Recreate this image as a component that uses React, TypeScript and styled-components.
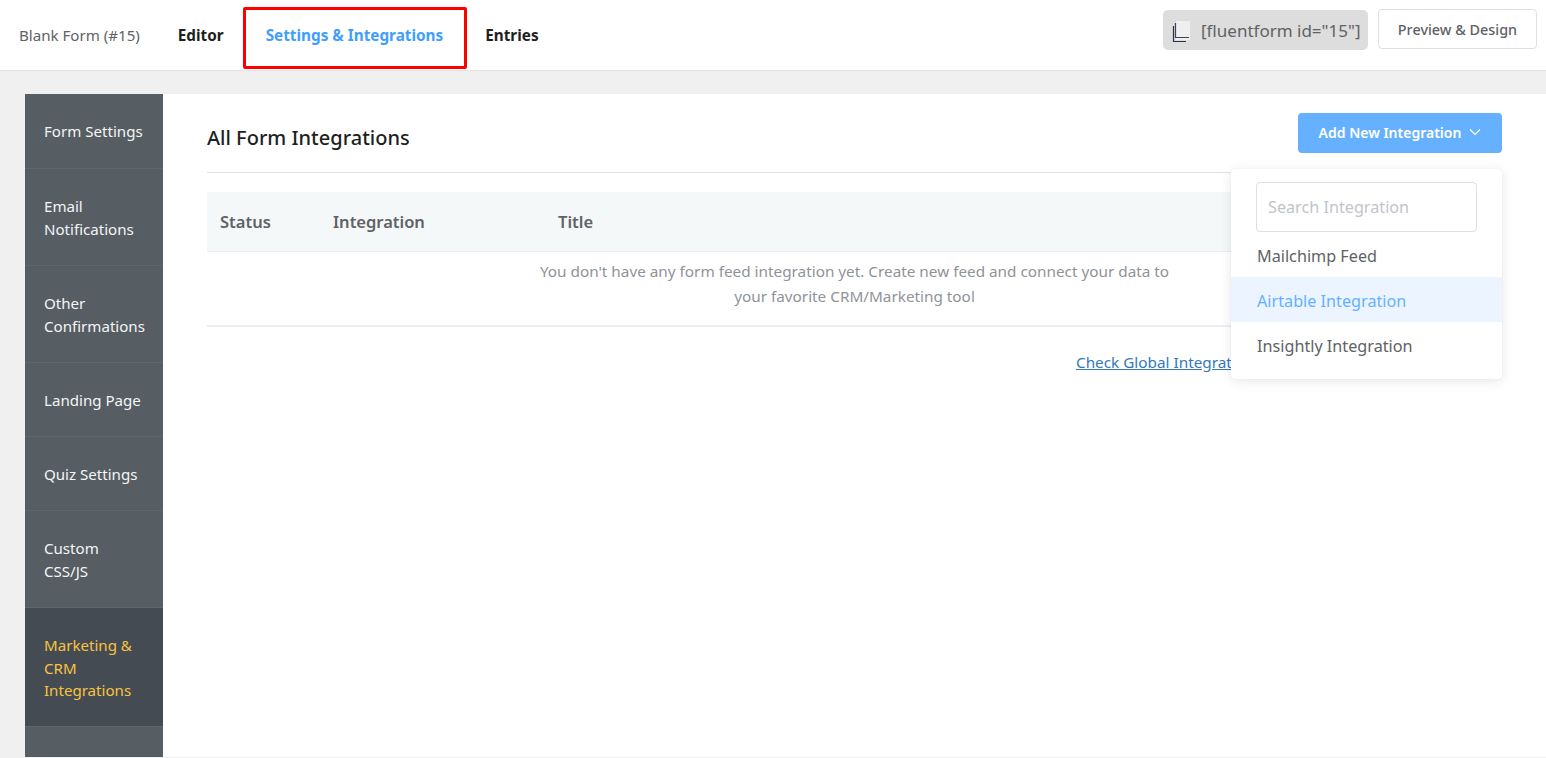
import React from 'react';
import styled, { createGlobalStyle } from 'styled-components';

const GlobalStyle = createGlobalStyle`
    html, body {
        margin: 0;
        padding: 0;
        background: #f0f0f0;
        font-family: "Noto Sans", "Open Sans", sans-serif;
    }
    * {
        box-sizing: border-box;
    }
`;

const Page = styled.div`
    width: 1546px;
    height: 758px;
    overflow: hidden;
    display: flex;
    flex-direction: column;
`;

const Header = styled.header`
    position: relative;
    height: 71px;
    flex: none;
    display: flex;
    align-items: center;
    justify-content: space-between;
    padding: 0 9px 0 19px;
    background: #fff;
    border-bottom: 1px solid #e3e3e3;
`;

const HeaderLeft = styled.nav`
    display: flex;
    align-items: center;
    gap: 42px;
`;

const FormName = styled.span`
    margin-right: -4px;
    font-size: 15.1px;
    color: #606266;
`;

const Tab = styled.a<{ $active?: boolean }>`
    font-size: 15.3px;
    font-weight: 700;
    color: ${props => props.$active ? '#409eff' : '#1e1f21'};
`;

const RedBox = styled.div`
    position: absolute;
    left: 243px;
    top: 7px;
    width: 224px;
    height: 62px;
    border: 3px solid #fe0000;
    border-radius: 2px;
`;

const HeaderRight = styled.div`
    display: flex;
    align-items: flex-start;
    gap: 10px;
    height: 41px;
    margin-bottom: 11px;
`;

const ShortCode = styled.div`
    width: 205px;
    height: 40px;
    display: flex;
    align-items: center;
    gap: 8px;
    padding-left: 9px;
    margin-top: 1px;
    border-radius: 5px;
    background: #dddddd;
    font-size: 17px;
    color: #606266;
    white-space: nowrap;
`;

const PreviewButton = styled.button`
    width: 159px;
    height: 40px;
    background: #fff;
    border: 1px solid #dcdfe6;
    border-radius: 4px;
    font-family: inherit;
    font-size: 14.4px;
    font-weight: 500;
    color: #606266;
`;

const Body = styled.div`
    flex: 1;
    display: flex;
    margin: 23px 0 1px 25px;
    min-height: 0;
`;

const Sidebar = styled.aside`
    width: 138px;
    flex: none;
    background: #565d63;
`;

const SideItem = styled.a<{ $active?: boolean }>`
    display: block;
    padding: 26.3px 8px 24.3px 19px;
    border-bottom: 1px solid #5f666c;
    font-size: 15.1px;
    line-height: 22.6px;
    color: ${props => props.$active ? '#f7c33f' : '#f4f5f5'};
    background: ${props => props.$active ? '#454b52' : 'transparent'};
    &:first-child {
        padding-bottom: 25.3px;
    }
`;

const Main = styled.main`
    position: relative;
    flex: 1;
    padding: 19px 44px 0;
    background: #fff;
`;

const TitleRow = styled.div`
    height: 60px;
    display: flex;
    justify-content: space-between;
    align-items: flex-start;
    border-bottom: 1px solid #dcdfe6;
`;

const Title = styled.h2`
    margin: 11px 0 0;
    font-size: 20px;
    line-height: 28px;
    font-weight: 500;
    color: #1e1f21;
`;

const AddButton = styled.button`
    width: 204px;
    height: 40px;
    display: flex;
    align-items: center;
    justify-content: center;
    gap: 8px;
    padding: 0 0 2px;
    background: #66b1ff;
    border: none;
    border-radius: 4px;
    font-family: inherit;
    font-size: 14px;
    font-weight: 600;
    color: #fff;
`;

const TableHead = styled.div`
    height: 60px;
    margin-top: 19px;
    display: flex;
    align-items: center;
    background: #f5f8f9;
    border-bottom: 1px solid #ebeef5;
`;

const HeadCell = styled.div<{ $width: number }>`
    width: ${props => props.$width}px;
    padding-left: 13px;
    font-size: 16.5px;
    font-weight: 600;
    color: #606266;
`;

const EmptyText = styled.p`
    width: 650px;
    margin: 0 auto;
    padding: 7px 0 16px;
    text-align: center;
    font-size: 15.3px;
    line-height: 25px;
    color: #909399;
`;

const TableEnd = styled.div`
    height: 2px;
    background: #ebeef5;
`;

const LinkRow = styled.div`
    padding: 24px 0 0 869px;
`;

const GlobalLink = styled.a`
    font-size: 15.3px;
    line-height: 22px;
    color: #337ab7;
    text-decoration: underline;
    white-space: nowrap;
`;

const Dropdown = styled.div`
    position: absolute;
    left: 1068px;
    top: 75px;
    width: 271px;
    height: 210px;
    padding-top: 13px;
    background: #fff;
    border-radius: 4px;
    box-shadow: 0 0 1px rgba(0, 0, 0, 0.12), 0 2px 12px 0 rgba(0, 0, 0, 0.1);
`;

const SearchInput = styled.input`
    display: block;
    width: 221px;
    height: 50px;
    margin: 0 0 0 25px;
    padding: 0 11px;
    border: 1px solid #dcdfe6;
    border-radius: 4px;
    font-family: inherit;
    font-size: 16.2px;
    color: #606266;
    &::placeholder {
        color: #c0c4cc;
        opacity: 1;
    }
`;

const DropItem = styled.div<{ $active?: boolean }>`
    height: 45px;
    display: flex;
    align-items: center;
    padding: 2px 0 0 26px;
    font-size: 16.2px;
    color: ${props => props.$active ? '#66b1ff' : '#606266'};
    background: ${props => props.$active ? '#ecf5ff' : 'transparent'};
`;

const Chevron = () => (
    <svg width="12" height="12" viewBox="0 0 12 12" fill="none" stroke="#fff" strokeWidth="1.1">
        <path d="M1 3.5 6 8.5 11 3.5" />
    </svg>
);

const CopyIcon = () => (
    <svg width="21" height="24" viewBox="0 0 21 24" fill="none">
        <rect x="4" y="3" width="14" height="19" fill="#efefef" />
        <path d="M3.5 5V19.5H17" stroke="#3a4256" strokeWidth="1.2" />
        <path d="M1.5 8V23.5H14" stroke="#2b3040" strokeWidth="1.2" />
    </svg>
);

const sideItems = [
    ['Form Settings'],
    ['Email', 'Notifications'],
    ['Other', 'Confirmations'],
    ['Landing Page'],
    ['Quiz Settings'],
    ['Custom', 'CSS/JS'],
];

const App: React.FC = () => {
    return (
        <Page>
            <GlobalStyle />
            <Header>
                <HeaderLeft>
                    <FormName>Blank Form (#15)</FormName>
                    <Tab>Editor</Tab>
                    <Tab $active>Settings &amp; Integrations</Tab>
                    <Tab>Entries</Tab>
                </HeaderLeft>
                <HeaderRight>
                    <ShortCode>
                        <CopyIcon />
                        <span>[fluentform id="15"]</span>
                    </ShortCode>
                    <PreviewButton>Preview &amp; Design</PreviewButton>
                </HeaderRight>
                <RedBox />
            </Header>
            <Body>
                <Sidebar>
                    {sideItems.map(lines => (
                        <SideItem key={lines[0]}>
                            {lines.map(line => <div key={line}>{line}</div>)}
                        </SideItem>
                    ))}
                    <SideItem $active>
                        <div>Marketing &amp;</div>
                        <div>CRM</div>
                        <div>Integrations</div>
                    </SideItem>
                </Sidebar>
                <Main>
                    <TitleRow>
                        <Title>All Form Integrations</Title>
                        <AddButton>Add New Integration <Chevron /></AddButton>
                    </TitleRow>
                    <TableHead>
                        <HeadCell $width={113}>Status</HeadCell>
                        <HeadCell $width={225}>Integration</HeadCell>
                        <HeadCell $width={200}>Title</HeadCell>
                    </TableHead>
                    <EmptyText>
                        You don't have any form feed integration yet. Create new feed and connect your data to your favorite CRM/Marketing tool
                    </EmptyText>
                    <TableEnd />
                    <LinkRow>
                        <GlobalLink>Check Global Integration Settings</GlobalLink>
                    </LinkRow>
                    <Dropdown>
                        <SearchInput placeholder="Search Integration" />
                        <DropItem>Mailchimp Feed</DropItem>
                        <DropItem $active>Airtable Integration</DropItem>
                        <DropItem>Insightly Integration</DropItem>
                    </Dropdown>
                </Main>
            </Body>
        </Page>
    );
};

export default App;
